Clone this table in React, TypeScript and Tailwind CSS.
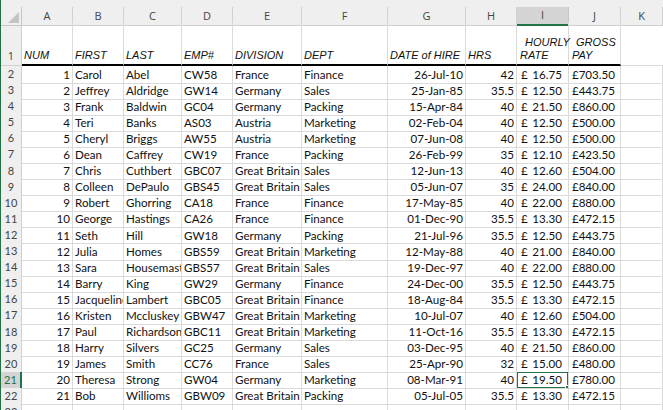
import React from 'react';

type Emp = [number, string, string, string, string, string, string, string, string, string];

const employees: Emp[] = [
  [1, 'Carol', 'Abel', 'CW58', 'France', 'Finance', '26-Jul-10', '42', '16.75', '703.50'],
  [2, 'Jeffrey', 'Aldridge', 'GW14', 'Germany', 'Sales', '25-Jan-85', '35.5', '12.50', '443.75'],
  [3, 'Frank', 'Baldwin', 'GC04', 'Germany', 'Packing', '15-Apr-84', '40', '21.50', '860.00'],
  [4, 'Teri', 'Banks', 'AS03', 'Austria', 'Marketing', '02-Feb-04', '40', '12.50', '500.00'],
  [5, 'Cheryl', 'Briggs', 'AW55', 'Austria', 'Marketing', '07-Jun-08', '40', '12.50', '500.00'],
  [6, 'Dean', 'Caffrey', 'CW19', 'France', 'Packing', '26-Feb-99', '35', '12.10', '423.50'],
  [7, 'Chris', 'Cuthbert', 'GBC07', 'Great Britain', 'Sales', '12-Jun-13', '40', '12.60', '504.00'],
  [8, 'Colleen', 'DePaulo', 'GBS45', 'Great Britain', 'Sales', '05-Jun-07', '35', '24.00', '840.00'],
  [9, 'Robert', 'Ghorring', 'CA18', 'France', 'Finance', '17-May-85', '40', '22.00', '880.00'],
  [10, 'George', 'Hastings', 'CA26', 'France', 'Finance', '01-Dec-90', '35.5', '13.30', '472.15'],
  [11, 'Seth', 'Hill', 'GW18', 'Germany', 'Packing', '21-Jul-96', '35.5', '12.50', '443.75'],
  [12, 'Julia', 'Homes', 'GBS59', 'Great Britain', 'Marketing', '12-May-88', '40', '21.00', '840.00'],
  [13, 'Sara', 'Housemaster', 'GBS57', 'Great Britain', 'Sales', '19-Dec-97', '40', '22.00', '880.00'],
  [14, 'Barry', 'King', 'GW29', 'Germany', 'Finance', '24-Dec-00', '35.5', '12.50', '443.75'],
  [15, 'Jacqueline', 'Lambert', 'GBC05', 'Great Britain', 'Finance', '18-Aug-84', '35.5', '13.30', '472.15'],
  [16, 'Kristen', 'Mccluskey', 'GBW47', 'Great Britain', 'Marketing', '10-Jul-07', '40', '12.60', '504.00'],
  [17, 'Paul', 'Richardson', 'GBC11', 'Great Britain', 'Marketing', '11-Oct-16', '35.5', '13.30', '472.15'],
  [18, 'Harry', 'Silvers', 'GC25', 'Germany', 'Sales', '03-Dec-95', '40', '21.50', '860.00'],
  [19, 'James', 'Smith', 'CC76', 'France', 'Sales', '25-Apr-90', '32', '15.00', '480.00'],
  [20, 'Theresa', 'Strong', 'GW04', 'Germany', 'Marketing', '08-Mar-91', '40', '19.50', '780.00'],
  [21, 'Bob', 'Willioms', 'GBW09', 'Great Britain', 'Packing', '05-Jul-05', '35.5', '13.30', '472.15'],
];

const letters = ['A', 'B', 'C', 'D', 'E', 'F', 'G', 'H', 'I', 'J', 'K'];

const gridCols =
  'grid grid-cols-[21px_51px_51px_58px_51px_69px_86px_78px_51px_52px_52px_1fr]';

const cell = 'overflow-hidden whitespace-nowrap border-r border-b border-[#dadada] flex items-center';

function RowHead({ n, active }: { n: number | string; active?: boolean }) {
  return (
    <div
      className={
        active
          ? 'flex items-center justify-center border-b border-r-2 border-b-[#c9c9c9] border-r-[#217346] bg-[#d4d4d4] text-[11px] text-[#217346]'
          : 'flex items-center justify-center border-b border-r border-[#d0d0d0] bg-[#efefef] text-[11px] text-[#444]'
      }
    >
      {n}
    </div>
  );
}

export default function App() {
  return (
    <div className="h-[410px] w-[663px] overflow-hidden border-l border-[#217346] bg-white font-['Lato',sans-serif] text-[11.6px] text-[#111]">
      {/* top strip */}
      <div className="h-[7px] bg-[#efefef]" />

      {/* column letters */}
      <div className={`${gridCols} h-[15px] font-['Open_Sans',sans-serif] text-[11px] text-[#444]`}>
        <div className="relative border-r border-b border-[#c6c6c6] bg-[#efefef]">
          <svg className="absolute right-[2px] bottom-[2px]" width="11" height="11" viewBox="0 0 11 11">
            <polygon points="11,0 11,11 0,11" fill="#c4c4c4" />
          </svg>
        </div>
        {letters.map((l) => (
          <div
            key={l}
            className={
              l === 'I'
                ? 'flex items-center justify-center border-r border-b-2 border-r-[#c6c6c6] border-b-[#217346] bg-[#d4d4d4]'
                : 'flex items-center justify-center border-r border-b border-[#d0d0d0] bg-[#efefef]'
            }
          >
            {l}
          </div>
        ))}
      </div>

      {/* row 1: headings */}
      <div className={`${gridCols} h-[44px] font-['Liberation_Sans',sans-serif] text-[11px] italic leading-[13px] text-[#111]`}>
        <div className="flex items-end justify-center border-b border-r border-[#d0d0d0] bg-[#efefef] pb-[3px] font-['Open_Sans',sans-serif] text-[11px] not-italic text-[#444]">
          1
        </div>
        {['NUM', 'FIRST', 'LAST', 'EMP#', 'DIVISION', 'DEPT', 'DATE of HIRE', 'HRS'].map((h) => (
          <div key={h} className="flex items-end overflow-hidden whitespace-nowrap border-r border-r-[#dadada] border-b-2 border-b-black px-[2px] pb-[2px]">
            {h}
          </div>
        ))}
        <div className="flex flex-col justify-end border-r border-r-[#dadada] border-b-2 border-b-black px-[3px] pb-[2px]">
          <span className="pl-[5px]">HOURLY</span>
          <span>RATE</span>
        </div>
        <div className="flex flex-col justify-end border-r border-r-[#dadada] border-b-2 border-b-black px-[3px] pb-[2px]">
          <span className="pl-[4px]">GROSS</span>
          <span>PAY</span>
        </div>
        <div className="border-b border-[#dadada]" />
      </div>

      {/* data rows */}
      {employees.map((e, i) => {
        const rowNo = i + 2;
        const active = rowNo === 21;
        return (
          <div key={rowNo} className={`${gridCols} h-[16.1px]`}>
            <RowHead n={rowNo} active={active} />
            <div className={`${cell} justify-end px-[2px]`}>{e[0]}</div>
            <div className={`${cell} px-[2px]`}>{e[1]}</div>
            <div className={`${cell} px-[2px]`}>{e[2]}</div>
            <div className={`${cell} px-[2px]`}>{e[3]}</div>
            <div className={`${cell} px-[2px]`}>{e[4]}</div>
            <div className={`${cell} px-[2px]`}>{e[5]}</div>
            <div className={`${cell} justify-end px-[2px]`}>{e[6]}</div>
            <div className={`${cell} justify-end px-[2px]`}>{e[7]}</div>
            <div className={`${cell} relative justify-between pr-[6px] pl-[4px]`}>
              <span>£</span>
              <span>{e[8]}</span>
              {active && (
                <div className="absolute -top-[1px] -left-[1px] -right-[1px] -bottom-[1px] border-2 border-[#217346]">
                  <div className="absolute -right-[4px] -bottom-[4px] h-[6px] w-[6px] border border-white bg-[#217346]" />
                </div>
              )}
            </div>
            <div className={`${cell} justify-end pr-[5px]`}>£{e[9]}</div>
            <div className={cell} />
          </div>
        );
      })}

      {/* row 23 */}
      <div className={`${gridCols} h-[16.1px]`}>
        <RowHead n={23} />
        {letters.map((l) => (
          <div key={l} className={cell} />
        ))}
      </div>
    </div>
  );
}
